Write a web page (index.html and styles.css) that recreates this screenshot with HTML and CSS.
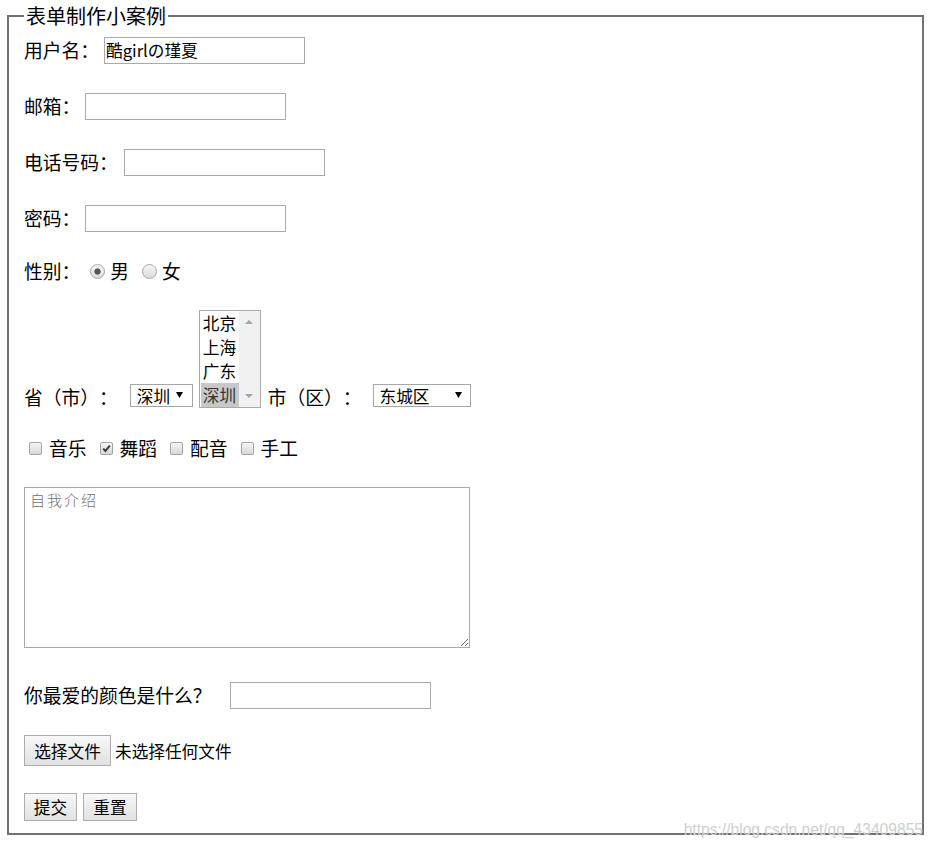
FILE: index.html
```html
<!DOCTYPE html>
<html lang="zh-CN">
<head>
<meta charset="utf-8">
<title>表单制作小案例</title>
<link rel="stylesheet" href="styles.css">
</head>
<body>
<div class="page">
  <form class="form">
    <fieldset class="box">
      <legend class="box-title">表单制作小案例</legend>

      <div class="row">
        <label class="lbl" for="user">用户名：</label>
        <input class="text" id="user" type="text" value="酷girlの瑾夏">
      </div>

      <div class="row gap-28">
        <label class="lbl" for="mail">邮箱：</label>
        <input class="text" id="mail" type="text">
      </div>

      <div class="row gap-28">
        <label class="lbl" for="tel">电话号码：</label>
        <input class="text text-tel" id="tel" type="text">
      </div>

      <div class="row gap-28">
        <label class="lbl" for="pwd">密码：</label>
        <input class="text" id="pwd" type="password">
      </div>

      <div class="row gap-25">
        <span class="lbl">性别：</span>
        <label class="opt opt-first"><input class="radio" type="radio" name="sex" checked>男</label>
        <label class="opt"><input class="radio" type="radio" name="sex">女</label>
      </div>

      <div class="row row-area gap-25">
        <span class="lbl lbl-low">省（市）：</span>
        <span class="select select-prov">
          <span class="select-text">深圳</span>
          <svg class="select-arrow" width="7" height="6" viewBox="0 0 7 6"><path d="M0 0H7L3.5 6Z" fill="#000"/></svg>
        </span>
        <div class="listbox">
          <ul class="list-items">
            <li class="list-item">北京</li>
            <li class="list-item">上海</li>
            <li class="list-item">广东</li>
            <li class="list-item is-selected">深圳</li>
          </ul>
          <div class="scrollbar">
            <svg width="8" height="4" viewBox="0 0 8 4"><path d="M0 4L4 0L8 4Z" fill="#a3a3a3"/></svg>
            <svg width="8" height="4" viewBox="0 0 8 4"><path d="M0 0H8L4 4Z" fill="#a3a3a3"/></svg>
          </div>
        </div>
        <span class="lbl lbl-low lbl-city">市（区）：</span>
        <span class="select select-city">
          <span class="select-text">东城区</span>
          <svg class="select-arrow" width="7" height="6" viewBox="0 0 7 6"><path d="M0 0H7L3.5 6Z" fill="#000"/></svg>
        </span>
      </div>

      <div class="row gap-26">
        <label class="chk chk-first"><span class="cb"></span>音乐</label>
        <label class="chk"><span class="cb cb-on"><svg width="11" height="11" viewBox="0 0 11 11"><path d="M2.2 5.6L4.4 8L8.8 2.6" fill="none" stroke="#3a3a3a" stroke-width="2"/></svg></span>舞蹈</label>
        <label class="chk"><span class="cb"></span>配音</label>
        <label class="chk"><span class="cb"></span>手工</label>
      </div>

      <textarea class="intro gap-25" placeholder="自我介绍"></textarea>

      <div class="row gap-33">
        <label class="lbl" for="color">你最爱的颜色是什么？</label>
        <input class="text text-color" id="color" type="text">
      </div>

      <div class="row row-file gap-26">
        <button class="btn btn-file" type="button">选择文件</button>
        <span class="file-name">未选择任何文件</span>
      </div>

      <div class="row gap-27">
        <button class="btn btn-small" type="submit">提交</button>
        <button class="btn btn-small btn-reset" type="reset">重置</button>
      </div>
    </fieldset>
  </form>
  <div class="watermark">https://blog.csdn.net/qq_43409855</div>
</div>
</body>
</html>
```

FILE: styles.css
```css
* {
  box-sizing: border-box;
}

html,
body {
  margin: 0;
  padding: 0;
  background: #fff;
}

body {
  font-family: "Noto Sans CJK SC", "Microsoft YaHei", sans-serif;
  color: #000;
  text-spacing-trim: space-all;
}

.page {
  position: relative;
  width: 934px;
  height: 851px;
  padding: 4px 10px 0 7px;
}

.form {
  margin: 0;
}

.box {
  margin: 0;
  min-width: 0;
  border: 2px solid #727272;
  padding: 8px 15px 12px 15px;
  display: flex;
  flex-direction: column;
  align-items: flex-start;
}

.box-title {
  font-size: 20px;
  line-height: 24px;
  padding: 0 2px;
}

.row {
  display: flex;
  align-items: center;
  height: 28px;
  font-size: 18.75px;
  line-height: 28px;
}

.gap-25 { margin-top: 25px; }
.gap-26 { margin-top: 26px; }
.gap-27 { margin-top: 27px; }
.gap-28 { margin-top: 28px; }
.gap-33 { margin-top: 33px; }

.lbl {
  white-space: nowrap;
}

.text {
  width: 201px;
  height: 27px;
  margin: 0 0 0 5px;
  border: 1px solid #a9a9a9;
  border-radius: 0;
  padding: 0 1px;
  font-family: "Noto Sans CJK SC", "Microsoft YaHei", sans-serif;
  font-size: 16.67px;
  color: #000;
  outline: none;
}

.text-tel {
  margin-left: 6px;
}

.text-color {
  margin-left: 18px;
}

/* radios */
.opt {
  display: flex;
  align-items: center;
  margin-left: 13px;
}

.opt-first {
  margin-left: 10px;
}

.radio {
  appearance: none;
  -webkit-appearance: none;
  width: 15px;
  height: 15px;
  margin: 0 5px 0 0;
  border: 1px solid #a8a8a8;
  border-radius: 50%;
  background: linear-gradient(#f7f7f7, #dadada);
}

.radio:checked {
  background:
    radial-gradient(circle, #555 0 2.8px, transparent 3.4px),
    linear-gradient(#f7f7f7, #dadada);
}

/* province / city row */
.row-area {
  align-items: flex-end;
  height: 98px;
}

.lbl-low {
  line-height: 22px;
  height: 22px;
}

.lbl-city {
  margin-left: 7px;
}

.select {
  display: flex;
  align-items: center;
  justify-content: space-between;
  height: 23px;
  border: 1px solid #a6a6a6;
  background: #fff;
  font-size: 16.67px;
  line-height: 21px;
  margin-bottom: 1px;
}

.select-prov {
  width: 63px;
  margin-left: 12px;
  padding: 1px 9px 0 6px;
}

.select-city {
  width: 98px;
  margin-left: 11px;
  padding: 1px 8px 0 6px;
}

.select-text {
  white-space: nowrap;
}

.select-arrow {
  flex: none;
  margin-top: -3px;
}

.listbox {
  display: flex;
  width: 62px;
  height: 98px;
  margin-left: 6px;
  border: 1px solid #a9a9a9;
  background: #fff;
}

.list-items {
  list-style: none;
  margin: 0;
  padding: 0 0 0 1px;
  width: 39px;
  font-size: 16.67px;
  line-height: 24px;
}

.list-item {
  height: 24px;
  padding-left: 2px;
  white-space: nowrap;
}

.list-item.is-selected {
  background: #c8c8c8;
  color: #333;
}

.scrollbar {
  flex: 1;
  background: #f1f1f1;
  display: flex;
  flex-direction: column;
  align-items: center;
  justify-content: space-between;
  padding: 9px 0 9px 0;
}

.scrollbar svg {
  display: block;
}

/* checkboxes */
.chk {
  display: flex;
  align-items: center;
  margin-left: 13px;
}

.chk-first {
  margin-left: 5px;
}

.cb {
  display: flex;
  align-items: center;
  justify-content: center;
  width: 13px;
  height: 13px;
  margin-right: 7px;
  border: 1px solid #a4a4a4;
  border-radius: 2px;
  background: linear-gradient(#f4f4f4, #d8d8d8);
}

.cb svg {
  display: block;
  flex: none;
}

/* textarea */
.intro {
  display: block;
  width: 446px;
  height: 161px;
  margin-left: 0;
  margin-right: 0;
  margin-bottom: 0;
  border: 1px solid #a9a9a9;
  border-radius: 0;
  padding: 2px 5px;
  font-family: "Noto Sans CJK SC", sans-serif;
  font-size: 15px;
  line-height: 20px;
  letter-spacing: 2px;
  outline: none;
}

.intro::placeholder {
  color: #707070;
  font-weight: 300;
}

/* buttons */
.btn {
  margin: 0;
  border: 1px solid #adadad;
  border-radius: 0;
  background: linear-gradient(#f8f8f8, #e1e1e1);
  font-family: "Noto Sans CJK SC", "Microsoft YaHei", sans-serif;
  font-size: 16.67px;
  line-height: 20px;
  color: #000;
  padding: 0;
}

.row-file {
  height: 31px;
}

.btn-file {
  width: 87px;
  height: 31px;
}

.file-name {
  margin-left: 4px;
  font-size: 16.67px;
}

.btn-small {
  width: 53px;
  height: 28px;
}

.btn-reset {
  width: 54px;
  margin-left: 6px;
}

.watermark {
  position: absolute;
  top: 821px;
  right: 11px;
  font-family: "Liberation Sans", Arial, sans-serif;
  font-size: 15.6px;
  line-height: 18px;
  color: #cfcfcf;
  white-space: nowrap;
}
```
